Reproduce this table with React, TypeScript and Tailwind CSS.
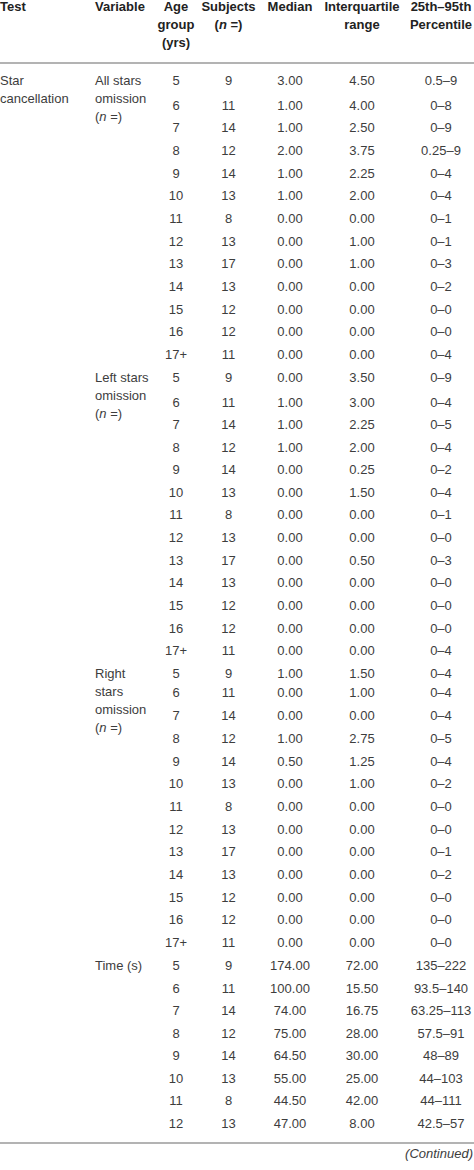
type Row = [string, string, string, string, string];

type Group = {
  test?: string[];
  variable: React.ReactNode[];
  rows: Row[];
  first: string;
  second: string;
  base: string;
  last: string;
};

const nEq = (
  <>
    (<i>n</i> =)
  </>
);

const groups: Group[] = [
  {
    test: ["Star", "cancellation"],
    variable: ["All stars", "omission", nEq],
    first: "h-[25px]",
    second: "h-[22.3px]",
    base: "h-[22.67px]",
    last: "h-[23.3px]",
    rows: [
      ["5", "9", "3.00", "4.50", "0.5–9"],
      ["6", "11", "1.00", "4.00", "0–8"],
      ["7", "14", "1.00", "2.50", "0–9"],
      ["8", "12", "2.00", "3.75", "0.25–9"],
      ["9", "14", "1.00", "2.25", "0–4"],
      ["10", "13", "1.00", "2.00", "0–4"],
      ["11", "8", "0.00", "0.00", "0–1"],
      ["12", "13", "0.00", "1.00", "0–1"],
      ["13", "17", "0.00", "1.00", "0–3"],
      ["14", "13", "0.00", "0.00", "0–2"],
      ["15", "12", "0.00", "0.00", "0–0"],
      ["16", "12", "0.00", "0.00", "0–0"],
      ["17+", "11", "0.00", "0.00", "0–4"],
    ],
  },
  {
    variable: ["Left stars", "omission", nEq],
    first: "h-[24.4px]",
    second: "h-[22.3px]",
    base: "h-[22.67px]",
    last: "h-[22.3px]",
    rows: [
      ["5", "9", "0.00", "3.50", "0–9"],
      ["6", "11", "1.00", "3.00", "0–4"],
      ["7", "14", "1.00", "2.25", "0–5"],
      ["8", "12", "1.00", "2.00", "0–4"],
      ["9", "14", "0.00", "0.25", "0–2"],
      ["10", "13", "0.00", "1.50", "0–4"],
      ["11", "8", "0.00", "0.00", "0–1"],
      ["12", "13", "0.00", "0.00", "0–0"],
      ["13", "17", "0.00", "0.50", "0–3"],
      ["14", "13", "0.00", "0.00", "0–0"],
      ["15", "12", "0.00", "0.00", "0–0"],
      ["16", "12", "0.00", "0.00", "0–0"],
      ["17+", "11", "0.00", "0.00", "0–4"],
    ],
  },
  {
    variable: ["Right", "stars", "omission", nEq],
    first: "h-[19.5px]",
    second: "h-[23.2px]",
    base: "h-[22.67px]",
    last: "h-[23.3px]",
    rows: [
      ["5", "9", "1.00", "1.50", "0–4"],
      ["6", "11", "0.00", "1.00", "0–4"],
      ["7", "14", "0.00", "0.00", "0–4"],
      ["8", "12", "1.00", "2.75", "0–5"],
      ["9", "14", "0.50", "1.25", "0–4"],
      ["10", "13", "0.00", "1.00", "0–2"],
      ["11", "8", "0.00", "0.00", "0–0"],
      ["12", "13", "0.00", "0.00", "0–0"],
      ["13", "17", "0.00", "0.00", "0–1"],
      ["14", "13", "0.00", "0.00", "0–2"],
      ["15", "12", "0.00", "0.00", "0–0"],
      ["16", "12", "0.00", "0.00", "0–0"],
      ["17+", "11", "0.00", "0.00", "0–0"],
    ],
  },
  {
    variable: ["Time (s)"],
    first: "h-[22.47px]",
    second: "h-[22.47px]",
    base: "h-[22.47px]",
    last: "h-[22.47px]",
    rows: [
      ["5", "9", "174.00", "72.00", "135–222"],
      ["6", "11", "100.00", "15.50", "93.5–140"],
      ["7", "14", "74.00", "16.75", "63.25–113"],
      ["8", "12", "75.00", "28.00", "57.5–91"],
      ["9", "14", "64.50", "30.00", "48–89"],
      ["10", "13", "55.00", "25.00", "44–103"],
      ["11", "8", "44.50", "42.00", "44–111"],
      ["12", "13", "47.00", "8.00", "42.5–57"],
    ],
  },
];

// widths of the five numeric columns
const numCols = ["w-[48px]", "w-[57px]", "w-[66px]", "w-[78px]", "w-[80px]"];

const rowHeight = (g: Group, i: number) => {
  if (i === 0) return g.first;
  if (i === 1) return g.second;
  if (i === g.rows.length - 1) return g.last;
  return g.base;
};

export default function App() {
  return (
    <div className="w-[474px] h-[1170px] overflow-hidden bg-white font-['Liberation_Sans',Arial,sans-serif] text-[13px] leading-[18px] text-[#3d3d3d]">
      <div className="w-[481px]">
        {/* Header */}
        <div className="flex -mt-[2px] pb-[10px] font-bold text-[#222]">
          <div className="w-[95px]">Test</div>
          <div className="w-[57px]">Variable</div>
          <div className="w-[48px] text-center">
            Age
            <br />
            group
            <br />
            (yrs)
          </div>
          <div className="w-[57px] text-center">
            Subjects
            <br />
            (<i>n</i> =)
          </div>
          <div className="w-[66px] text-center">Median</div>
          <div className="w-[78px] text-center">
            Interquartile
            <br />
            range
          </div>
          <div className="w-[80px] text-center whitespace-nowrap">
            25th–95th
            <br />
            Percentile
          </div>
        </div>
        <div className="h-[2px] bg-[#b3b3b3]" />
        <div className="h-[6px]" />

        {/* Body */}
        {groups.map((g, gi) => (
          <div key={gi} className="flex">
            <div className="w-[95px] pt-[2px]">
              {g.test?.map((t) => (
                <div key={t}>{t}</div>
              ))}
            </div>
            <div className="w-[57px] pt-[2px]">
              {g.variable.map((v, vi) => (
                <div key={vi} className="whitespace-nowrap">
                  {v}
                </div>
              ))}
            </div>
            <div className="flex flex-col">
              {g.rows.map((r, ri) => (
                <div key={ri} className={`flex ${rowHeight(g, ri)}`}>
                  {r.map((c, ci) => (
                    <div key={ci} className={`${numCols[ci]} pt-[2px] text-center whitespace-nowrap`}>
                      {c}
                    </div>
                  ))}
                </div>
              ))}
            </div>
          </div>
        ))}

        <div className="h-[6.5px]" />
        <div className="h-[2px] bg-[#b3b3b3]" />
        <p className="pt-[1px] pr-[8px] text-right italic">(Continued)</p>
      </div>
    </div>
  );
}
